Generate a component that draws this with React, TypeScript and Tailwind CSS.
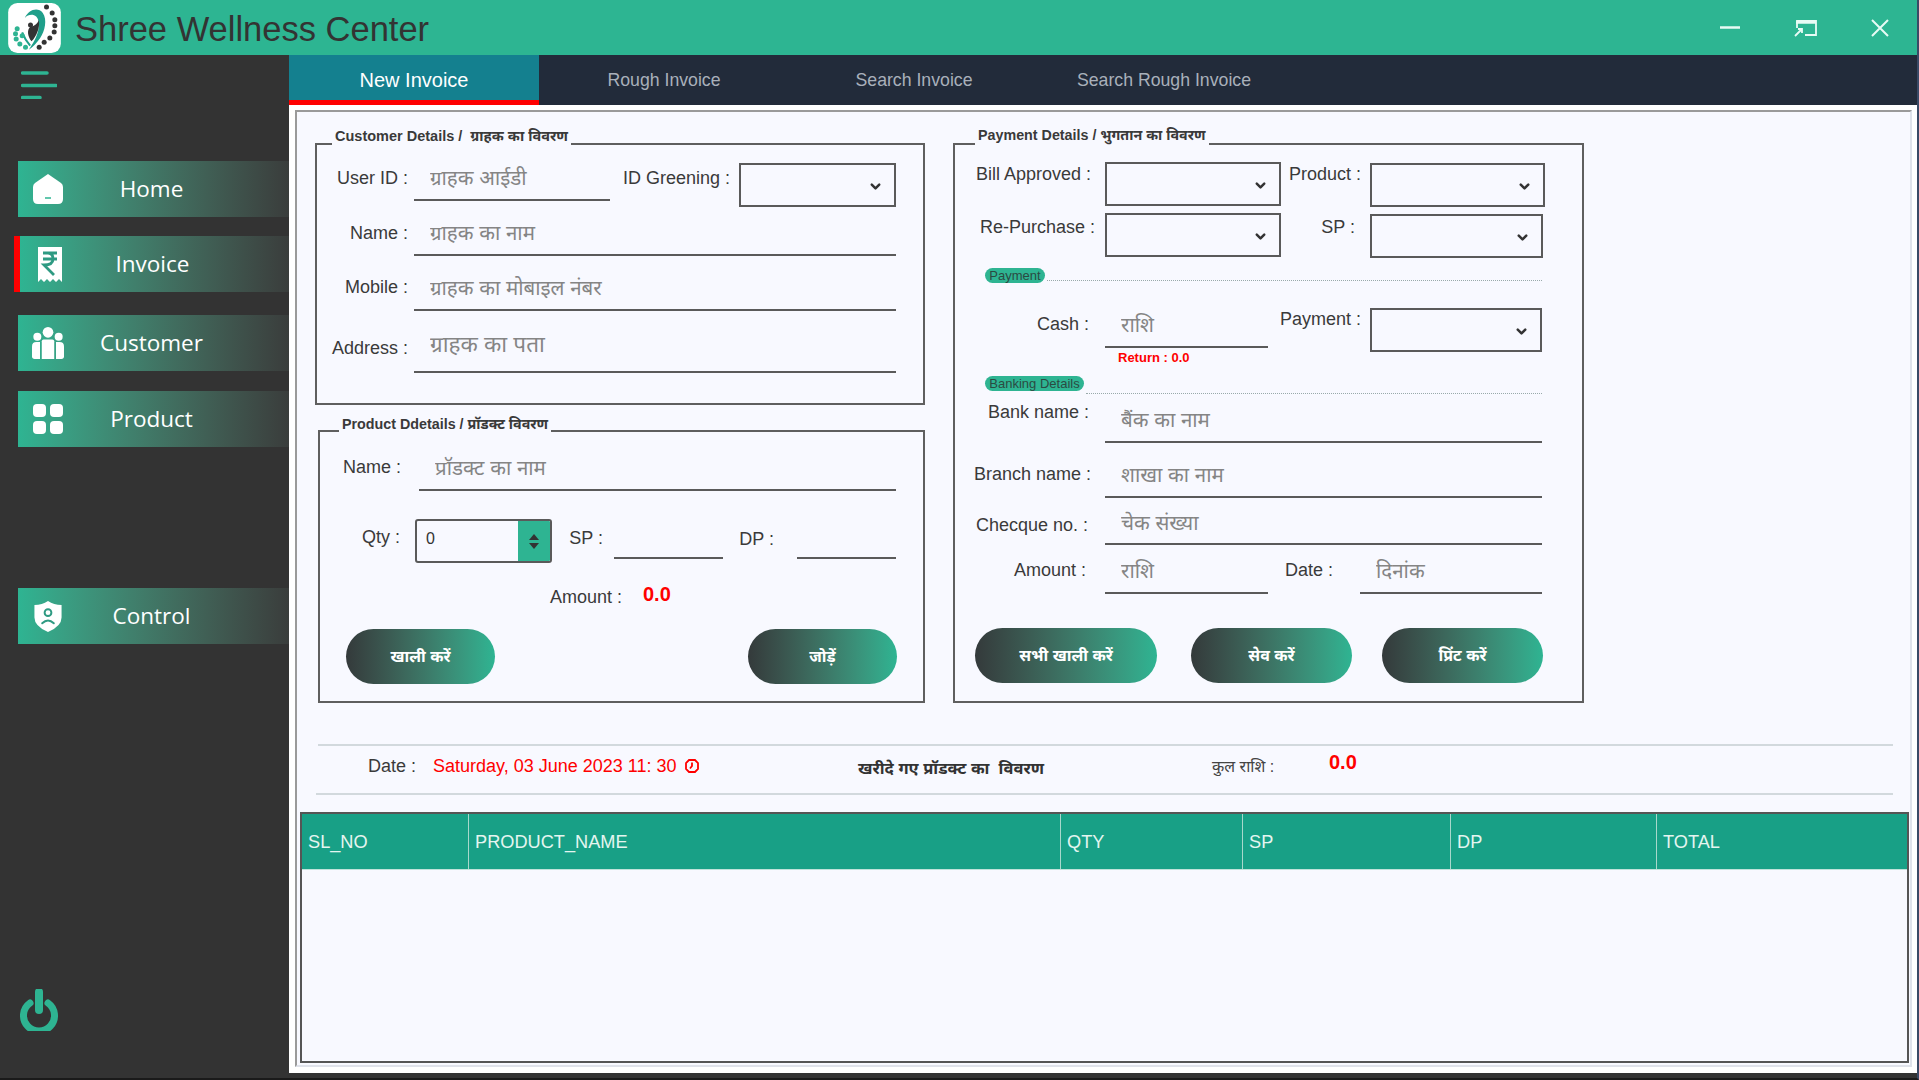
import React from 'react';
import { twMerge } from 'tailwind-merge';
import { ChevronDown } from 'lucide-react';

const Label = ({ className, children }: { className?: string; children: React.ReactNode }) => (
  <span className={twMerge('shrink-0 whitespace-nowrap pt-[1px] text-right text-[18px] leading-[28px] text-[#3a3a3a]', className)}>
    {children}
  </span>
);

// underlined text box, placeholder sits 15px below its top
const Line = ({ className, placeholder }: { className?: string; placeholder?: string }) => (
  <input
    placeholder={placeholder}
    className={twMerge(
      'h-[38px] shrink-0 border-b-2 border-[#5a5a5a] bg-transparent pb-[6px] pl-[16px] text-[20.5px] leading-[28px] outline-none placeholder:text-[#858585]',
      className,
    )}
  />
);

const Combo = ({ className }: { className?: string }) => (
  <div className={twMerge('flex h-[44px] shrink-0 items-center justify-end border-2 border-[#5a5a5a] pr-[11px]', className)}>
    <ChevronDown className="mt-[2px] h-[15px] w-[15px] text-[#333]" strokeWidth={4} />
  </div>
);

const Pill = ({ className, children }: { className?: string; children: React.ReactNode }) => (
  <button className={twMerge('h-[55px] shrink-0 rounded-full bg-gradient-to-r from-[#343a3b] to-[#2eb492] text-[16px] font-bold text-white', className)}>
    {children}
  </button>
);

const Tag = ({ className, children }: { className?: string; children: React.ReactNode }) => (
  <span className={twMerge('flex h-[15px] shrink-0 items-center justify-center whitespace-nowrap rounded-full bg-[#2eb492] text-[13px] text-[#2b4a42]', className)}>
    {children}
  </span>
);

const Group = ({ title, className, titleClass, children }: { title: string; className?: string; titleClass?: string; children: React.ReactNode }) => (
  <div className={twMerge('relative shrink-0 border-2 border-[#5f5f5f]', className)}>
    <span className={twMerge('absolute top-[-18px] whitespace-pre bg-[#f8f9ff] px-[3px] text-[14.3px] font-bold leading-[20px] text-[#3a3a3a]', titleClass)}>
      {title}
    </span>
    {children}
  </div>
);

const Logo = () => (
  <svg viewBox="0 0 158 150" className="ml-[8px] h-[50px] w-[53px] shrink-0">
    <rect width="158" height="150" rx="28" fill="#fff" />
    <path d="M50 45 C60 22 88 10 104 30 C118 50 110 85 96 105 C86 120 74 132 62 140 C74 122 86 104 91 78 C95 58 90 40 76 36 C66 34 56 38 50 45 Z" fill="#1f9f8a" />
    <path d="M92 50 C96 75 85 100 70 115 C58 100 56 80 66 72 C80 68 88 62 92 50 Z" fill="#333" />
    <path d="M42 88 C48 104 56 116 66 128" stroke="#1f9f8a" strokeWidth="6" fill="none" />
    {[[115, 12], [132, 30], [140, 50], [140, 68], [138, 87], [125, 105], [108, 118], [93, 133], [67, 66]].map(([cx, cy]) => (
      <circle key={`${cx}-${cy}`} cx={cx} cy={cy} r="7.5" fill="#333" />
    ))}
    {[[27, 77], [22, 92], [24, 108], [35, 123], [52, 133], [42, 98]].map(([cx, cy]) => (
      <circle key={`${cx}-${cy}`} cx={cx} cy={cy} r="7.5" fill="#2eb492" />
    ))}
  </svg>
);

const HomeIcon = () => (
  <svg viewBox="0 0 30 30" className="h-[30px] w-[30px]">
    <path d="M15 0 L28 9 Q30 10.500 30 13 V25 Q30 30 25 30 H5 Q0 30 0 25 V13 Q0 10.500 2 9 Z" fill="#fff" />
    <path d="M12 24 H18" stroke="#2eb492" strokeWidth="1.500" />
  </svg>
);

const InvoiceIcon = () => (
  <svg viewBox="0 0 24 36" className="h-[36px] w-[24px]">
    <path d="M0 1 H24 V36 L21 33 L18 36 L15 33 L12 36 L9 33 L6 36 L3 33 L0 36 Z" fill="#fff" />
    <path d="M5 7 H19 M5 13 H19 M7 7 H10 Q15 7 15 13 Q15 19 6 19 L16 29" stroke="#2e9a82" strokeWidth="2.800" fill="none" />
  </svg>
);

const CustomerIcon = () => (
  <svg viewBox="0 0 36 36" className="h-[32px] w-[36px]">
    <g fill="#fff">
      <circle cx="18" cy="6" r="6" />
      <circle cx="6" cy="11" r="4.500" />
      <circle cx="30" cy="11" r="4.500" />
      <path d="M11 16 Q11 14 13 14 H23 Q25 14 25 16 V36 H11 Z" />
      <path d="M0 22 Q0 17 5 17 H9 V36 H3 Q0 36 0 33 Z" />
      <path d="M36 22 Q36 17 31 17 H27 V36 H33 Q36 36 36 33 Z" />
    </g>
  </svg>
);

const ProductIcon = () => (
  <svg viewBox="0 0 30 30" className="h-[30px] w-[30px]" fill="#fff">
    <rect width="13" height="13" rx="4" />
    <rect x="17" width="13" height="13" rx="4" />
    <rect y="17" width="13" height="13" rx="4" />
    <rect x="17" y="17" width="13" height="13" rx="4" />
  </svg>
);

const ControlIcon = () => (
  <svg viewBox="0 0 28 32" className="h-[31px] w-[28px]">
    <path d="M14 0 Q20 4 28 4 V17 Q28 26 14 32 Q0 26 0 17 V4 Q8 4 14 0 Z" fill="#fff" />
    <circle cx="14" cy="12" r="3.500" fill="none" stroke="#2e9a82" strokeWidth="2" />
    <path d="M8 23 Q14 17 20 23" fill="none" stroke="#2e9a82" strokeWidth="2" strokeLinecap="round" />
  </svg>
);

const navItems = [
  { label: 'Home', icon: <HomeIcon />, cls: 'mt-0' },
  { label: 'Invoice', icon: <InvoiceIcon />, cls: 'mt-[19px] ml-[-4px] border-l-[6px] border-[#ff0000]' },
  { label: 'Customer', icon: <CustomerIcon />, cls: 'mt-[23px]' },
  { label: 'Product', icon: <ProductIcon />, cls: 'mt-[20px]' },
  { label: 'Control', icon: <ControlIcon />, cls: 'mt-[141px]' },
];

const tabs = ['New Invoice', 'Rough Invoice', 'Search Invoice', 'Search Rough Invoice'];

const columns = [
  { name: 'SL_NO', cls: 'w-[167px]' },
  { name: 'PRODUCT_NAME', cls: 'w-[592px]' },
  { name: 'QTY', cls: 'w-[182px]' },
  { name: 'SP', cls: 'w-[208px]' },
  { name: 'DP', cls: 'w-[206px]' },
  { name: 'TOTAL', cls: 'flex-1 border-r-0' },
];

const Sidebar = () => (
  <aside className="flex w-[289px] shrink-0 flex-col pl-[18px]">
    <div className="h-[106px] shrink-0 pl-[3px] pt-[16px]">
      <svg viewBox="0 0 36 28" className="h-[28px] w-[36px]" stroke="#2eb492" strokeWidth="3.500" strokeLinecap="round">
        <path d="M1.500 2 H26 M1.500 14.500 H35 M1.500 26.500 H19" />
      </svg>
    </div>
    {navItems.map((item) => (
      <div
        key={item.label}
        className={twMerge('grid h-[56px] shrink-0 grid-cols-[1fr_auto_1fr] items-center bg-gradient-to-r from-[#2eb492] to-[#3a3d3c] pr-[4px]', item.cls)}
      >
        <div className="flex w-[60px] justify-center">{item.icon}</div>
        <span className="font-['Open_Sans',sans-serif] text-[22.500px] text-white">{item.label}</span>
      </div>
    ))}
    <svg viewBox="0 0 38 42" className="ml-[2px] mt-[345px] h-[42px] w-[38px]" fill="none" stroke="#2eb492" strokeLinecap="round">
      <path d="M10 14 A15.500 15.500 0 1 0 28 14" strokeWidth="7" />
      <path d="M19 3 V21" strokeWidth="8" />
    </svg>
  </aside>
);

const CustomerBox = () => (
  <Group title="Customer Details /  ग्राहक का विवरण" className="h-[262px] w-[610px]" titleClass="left-[15px] top-[-19px] text-[14.500px]">
    <div className="flex items-start pt-[18px]">
      <Label className="mr-[6px] w-[91px]">User ID :</Label>
      <Line className="w-[196px]" placeholder="ग्राहक आईडी" />
      <Label className="ml-[13px] w-[106px]">ID Greening :</Label>
      <Combo className="ml-[10px] w-[157px]" />
    </div>
    <div className="mt-[11px] flex items-start">
      <Label className="mr-[6px] w-[91px]">Name :</Label>
      <Line className="w-[482px]" placeholder="ग्राहक का नाम" />
    </div>
    <div className="mt-[17px] flex items-start">
      <Label className="mr-[6px] mt-[-1px] w-[91px]">Mobile :</Label>
      <Line className="w-[482px]" placeholder="ग्राहक का मोबाइल नंबर" />
    </div>
    <div className="mt-[20px] flex items-start">
      <Label className="mr-[6px] mt-[2px] w-[91px]">Address :</Label>
      <Line className="h-[42px] w-[482px] pb-[12px] text-[22.5px]" placeholder="ग्राहक का पता" />
    </div>
  </Group>
);

const ProductBox = () => (
  <Group title="Product Ddetails / प्रॉडक्ट विवरण" className="ml-[3px] mt-[25px] h-[273px] w-[607px]" titleClass="left-[19px]">
    <div className="flex items-start pt-[20px]">
      <Label className="mr-[18px] w-[81px]">Name :</Label>
      <Line className="mt-[1px] w-[477px]" placeholder="प्रॉडक्ट का नाम" />
    </div>
    <div className="mt-[28px] flex items-start">
      <Label className="mr-[15px] mt-[3px] w-[80px]">Qty :</Label>
      <div className="flex h-[44px] w-[137px] shrink-0 overflow-hidden rounded-[3px] border-2 border-[#5a5a5a]">
        <span className="flex-1 pl-[9px] text-[16px] leading-[36px] text-[#333]">0</span>
        <div className="flex w-[32px] flex-col items-center justify-center gap-[3px] bg-[#2eb492]">
          <span className="h-0 w-0 border-x-[5px] border-b-[6px] border-x-transparent border-b-[#333]" />
          <span className="h-0 w-0 border-x-[5px] border-t-[6px] border-x-transparent border-t-[#333]" />
        </div>
      </div>
      <Label className="ml-[17px] mt-[4px] w-[34px]">SP :</Label>
      <Line className="ml-[11px] mt-[2px] w-[109px]" />
      <Label className="ml-[15px] mt-[5px] w-[36px]">DP :</Label>
      <Line className="ml-[23px] mt-[2px] w-[99px]" />
    </div>
    <div className="mt-[20px] flex items-start pl-[230px]">
      <Label className="mt-[-1px] w-[72px]">Amount :</Label>
      <span className="ml-[21px] mt-[-3px] text-[20px] font-bold leading-[28px] text-[#ff0000]">0.0</span>
    </div>
    <div className="mt-[18px] flex justify-between pl-[26px] pr-[26px]">
      <Pill className="w-[149px]">खाली करें</Pill>
      <Pill className="w-[149px]">जोड़ें</Pill>
    </div>
  </Group>
);

const PaymentBox = () => (
  <Group title="Payment Details / भुगतान का विवरण" className="ml-[28px] h-[560px] w-[631px]" titleClass="left-[20px] top-[-20px]">
    <div className="flex items-start pt-[17px]">
      <Label className="mt-[-3px] w-[136px]">Bill Approved :</Label>
      <Combo className="ml-[14px] w-[176px]" />
      <Label className="mt-[-3px] w-[80px]">Product :</Label>
      <Combo className="ml-[9px] mt-[1px] w-[175px]" />
    </div>
    <div className="mt-[6px] flex items-start">
      <Label className="mt-[-1px] w-[140px]">Re-Purchase :</Label>
      <Combo className="ml-[10px] w-[176px]" />
      <Label className="mt-[-1px] w-[74px]">SP :</Label>
      <Combo className="ml-[15px] mt-[1px] w-[173px]" />
    </div>
    <div className="mt-[10px] flex items-start pl-[30px]">
      <Tag className="w-[60px]">Payment</Tag>
      <div className="ml-[2px] mt-[12px] w-[495px] border-t border-dotted border-[#9aa]" />
    </div>
    <div className="mt-[25px] flex items-start">
      <Label className="mt-[1px] w-[134px]">Cash :</Label>
      <div className="ml-[16px] mt-[3px] flex w-[163px] shrink-0 flex-col">
        <Line className="h-[37px] w-full pb-[7px]" placeholder="राशि" />
        <span className="mt-[2px] pl-[13px] text-[13px] font-bold leading-[16px] text-[#ff0000]">Return : 0.0</span>
      </div>
      <Label className="mt-[-4px] w-[93px]">Payment :</Label>
      <Combo className="ml-[9px] w-[172px]" />
    </div>
    <div className="mt-[10px] flex items-start pl-[30px]">
      <Tag className="w-[99px]">Banking Details</Tag>
      <div className="ml-[2px] mt-[17px] w-[456px] border-t border-dotted border-[#9aa]" />
    </div>
    <div className="mt-[3px] flex items-start">
      <Label className="w-[134px]">Bank name :</Label>
      <Line className="ml-[16px] mt-[9px] h-[37px] w-[437px] pb-[7px]" placeholder="बैंक का नाम" />
    </div>
    <div className="mt-[16px] flex items-start">
      <Label className="w-[136px]">Branch name :</Label>
      <Line className="ml-[14px] mt-[2px] h-[37px] w-[437px] pb-[7px]" placeholder="शाखा का नाम" />
    </div>
    <div className="mt-[10px] flex items-start">
      <Label className="mt-[2px] w-[133px]">Checque no. :</Label>
      <Line className="ml-[17px] h-[37px] w-[437px] pb-[6px]" placeholder="चेक संख्या" />
    </div>
    <div className="mt-[11px] flex items-start">
      <Label className="mt-[-1px] w-[131px]">Amount :</Label>
      <Line className="ml-[19px] mt-[1px] h-[37px] w-[163px] pb-[7px]" placeholder="राशि" />
      <Label className="ml-[17px] mt-[-1px] w-[48px]">Date :</Label>
      <Line className="ml-[27px] mt-[1px] h-[37px] w-[182px] pb-[7px]" placeholder="दिनांक" />
    </div>
    <div className="mt-[34px] flex items-start pl-[20px]">
      <Pill className="w-[182px]">सभी खाली करें</Pill>
      <Pill className="ml-[34px] w-[161px]">सेव करें</Pill>
      <Pill className="ml-[30px] w-[161px]">प्रिंट करें</Pill>
    </div>
  </Group>
);

const InfoRow = () => (
  <>
    <div className="ml-[21px] mt-[41px] h-[2px] w-[1575px] bg-[#d2d9dd]" />
    <div className="flex h-[47px] items-start pl-[71px]">
      <div className="mt-[5px] flex w-[490px] items-center">
        <Label className="w-[65px] text-left">Date :</Label>
        <span className="whitespace-nowrap text-[18px] leading-[28px] text-[#ff0000]">Saturday, 03 June 2023 11: 30</span>
        <svg viewBox="0 0 14 14" className="ml-[8px] h-[14px] w-[14px]" fill="none" stroke="#ff0000" strokeWidth="1.800">
          <path d="M4 1 H10 L13 4 V10 L10 13 H4 L1 10 V4 Z" />
          <path d="M7 3.500 V7 L5 9.500" />
        </svg>
      </div>
      <span className="mt-[8px] w-[354px] whitespace-pre text-[16.5px] font-bold leading-[28px] text-[#333]">खरीदे गए प्रॉडक्ट का  विवरण</span>
      <span className="mt-[7px] w-[117px] text-[16px] leading-[28px] text-[#444]">कुल राशि :</span>
      <span className="mt-[2px] text-[20px] font-bold leading-[28px] text-[#ff0000]">0.0</span>
    </div>
    <div className="ml-[19px] h-[2px] w-[1577px] bg-[#d2d9dd]" />
  </>
);

const Table = () => (
  <div className="ml-[3px] mt-[17px] h-[251px] w-[1609px] border-2 border-[#555]">
    <div className="flex h-[56px] border-b border-[#bfe3da] bg-[#18a086]">
      {columns.map((c) => (
        <div key={c.name} className={twMerge('flex items-center border-r border-[#a8d8cc] pl-[6px] pt-[2px] text-[18.2px] text-[#e4f5f0]', c.cls)}>
          {c.name}
        </div>
      ))}
    </div>
  </div>
);

const App = () => {
  return (
    <div className="flex h-screen w-full flex-col overflow-hidden border-b-2 border-r-2 border-b-[#1a1a1a] border-r-[#3a4a66] bg-[#333333] font-['Liberation_Sans','Noto_Sans',sans-serif]">
      <header className="flex h-[55px] shrink-0 items-center bg-[#2db592] pr-[28px]">
        <Logo />
        <h1 className="ml-[14px] pt-[5px] text-[34.500px] font-normal text-[#333]">Shree Wellness Center</h1>
        <div className="ml-auto flex items-center">
          <svg viewBox="0 0 20 3" className="h-[3px] w-[20px]"><path d="M0 1.500 H20" stroke="#e8fbf5" strokeWidth="2.500" /></svg>
          <svg viewBox="0 0 23 18" className="ml-[54px] h-[18px] w-[23px]" fill="none" stroke="#e8fbf5" strokeWidth="1.800">
            <path d="M3 9 V2 H22 V16 H11" />
            <path d="M2 3.500 H22" strokeWidth="2.500" />
            <path d="M1 17 L8 10 M4 10 H8 V14" />
          </svg>
          <svg viewBox="0 0 18 18" className="ml-[54px] h-[18px] w-[18px]" stroke="#e8fbf5" strokeWidth="2"><path d="M1 1 L17 17 M17 1 L1 17" /></svg>
        </div>
      </header>
      <div className="flex min-h-0 flex-1 pb-[5px]">
        <Sidebar />
        <main className="flex min-w-0 flex-1 flex-col">
          <nav className="flex h-[50px] shrink-0 bg-[#222b3a]">
            {tabs.map((t, i) => (
              <div
                key={t}
                className={
                  i === 0
                    ? 'flex w-[250px] items-center justify-center border-b-[5px] border-[#ff0000] bg-[#14808f] pt-[4px] text-[20px] text-white'
                    : 'flex w-[250px] items-center justify-center text-[17.7px] text-[#a9b0ba]'
                }
              >
                {t}
              </div>
            ))}
          </nav>
          <div className="min-h-0 flex-1 bg-white pb-[6px] pl-[6px] pr-[5px] pt-[5px]">
            <div className="h-full border-2 border-b-[#dfe2ea] border-l-[#9a9a9a] border-r-[#dfe2ea] border-t-[#9a9a9a] bg-[#f8f9ff]">
              <div className="flex items-start pl-[18px] pt-[31px]">
                <div className="flex shrink-0 flex-col">
                  <CustomerBox />
                  <ProductBox />
                </div>
                <PaymentBox />
              </div>
              <InfoRow />
              <Table />
            </div>
          </div>
        </main>
      </div>
    </div>
  );
};

export default App;
